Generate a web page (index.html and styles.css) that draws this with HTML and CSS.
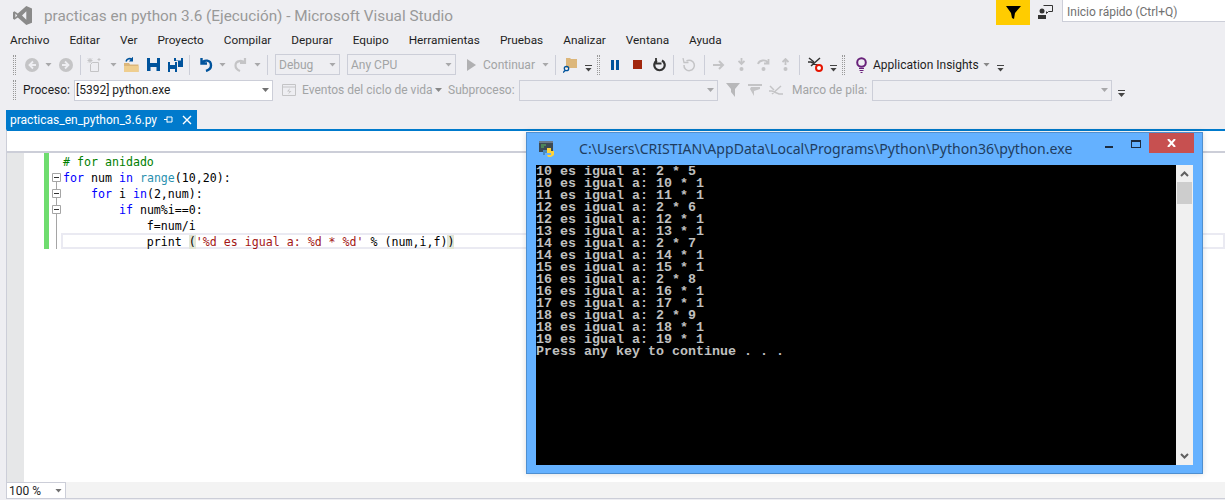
FILE: index.html
```html
<!DOCTYPE html>
<html lang="en">
<head>
    <meta charset="UTF-8">
    <title>practicas en python 3.6 (Ejecución) - Microsoft Visual Studio</title>
    <link rel="stylesheet" href="styles.css">
</head>
<body>
    <div class="titlebar">
        <svg class="vs-logo" viewBox="0 0 20 20"><path d="M14 0l6 2.500v15L14 20l-9-8-3.500 2.500L0 13.500v-7L1.500 5.500 5 8zM14 5.500L9.500 10l4.500 4.500zM2.500 8v4L4.500 10z" fill="#8a8a8a" fill-rule="evenodd"/></svg>
        <span class="app-title">practicas en python 3.6 (Ejecución) - Microsoft Visual Studio</span>
        <div class="notify">
            <svg width="15" height="15" viewBox="0 0 15 15"><path d="M0 1h15L9 8l-1 6-2-1-1-5z" fill="#000"/></svg>
        </div>
        <svg class="ml8 feedback" width="15" height="15" viewBox="0 0 15 15"><circle cx="4" cy="7" r="2.500" fill="#333"/><path d="M0 15v-4h8v4z" fill="#333"/><path d="M5.500 1.500h9v6h-4l-2 2v-2" fill="none" stroke="#333"/></svg>
        <div class="quick">Inicio rápido (Ctrl+Q)</div>
    </div>

    <div class="menubar">
        <span>Archivo</span><span>Editar</span><span>Ver</span><span>Proyecto</span><span>Compilar</span><span>Depurar</span><span>Equipo</span><span>Herramientas</span><span>Pruebas</span><span>Analizar</span><span>Ventana</span><span>Ayuda</span>
    </div>

    <div class="toolbar">
        <i class="grip ml13"></i>
        <svg class="ml9" width="14" height="14" viewBox="0 0 14 14"><circle cx="7" cy="7" r="7" fill="#c4c4c6"/><path d="M8 3.500L4.500 7 8 10.500M5 7h6" stroke="#eeeef2" stroke-width="1.800" fill="none"/></svg>
        <i class="caret ml6"></i>
        <svg class="ml7" width="14" height="14" viewBox="0 0 14 14"><circle cx="7" cy="7" r="7" fill="#c4c4c6"/><path d="M6 3.500L9.500 7 6 10.500M9 7H3" stroke="#eeeef2" stroke-width="1.800" fill="none"/></svg>
        <i class="sep ml7"></i>
        <svg class="ml6" width="16" height="16" viewBox="0 0 16 16"><path d="M5.500 5.500h6v9h-8v-7z" fill="#eeeef2" stroke="#c4c4c6"/><path d="M3 1v5M.5 3.500h5M1 1.500l4 4M5 1.500l-4 4" stroke="#c4c4c6"/><path d="M12 1v3M10.500 2.500h3" stroke="#c4c4c6"/></svg>
        <i class="caret ml7"></i>
        <svg class="ml6" width="16" height="16" viewBox="0 0 16 16"><path d="M1 6h5l1 1.500h8.500V15H1z" fill="#dcb67a"/><path d="M1 9h14.500V15H1z" fill="#efce8f"/><path d="M3 4.500C4 1.500 7 1 9 2.500" stroke="#00539c" stroke-width="1.600" fill="none"/><path d="M9 0v5H5z" fill="#00539c" transform="translate(1 -.5)"/></svg>
        <svg class="ml8" width="13" height="13" viewBox="0 0 13 13"><path d="M0 0h13v13H0z" fill="#00539c"/><path d="M3 0h7v5H3zM3.500 9h6v4h-6z" fill="#eeeef2"/></svg>
        <svg class="ml8" width="15" height="14" viewBox="0 0 15 14"><path d="M0 4h9v10H0z" fill="#00539c"/><path d="M2 4h5v3H2zM2 11h5v3H2z" fill="#eeeef2"/><path d="M6 0h9v9h-5V3H6z" fill="#00539c"/><path d="M8 0h5v2.500H8z" fill="#eeeef2"/></svg>
        <i class="sep ml6"></i>
        <svg class="ml9" width="14" height="15" viewBox="0 0 14 15"><path d="M2.500 1v5.500H8M3 6c2-3.500 9-3.500 9 2.500 0 2.500-2 4.500-5 5.500" stroke="#00539c" stroke-width="2.400" fill="none"/></svg>
        <i class="caret ml6"></i>
        <svg class="ml8" width="13" height="15" viewBox="0 0 13 15"><path d="M11 1v5H6M10.500 6C9 3 1.500 3 1.500 8.500c0 2.500 2 4.500 4.500 5.500" stroke="#c4c4c6" stroke-width="2.200" fill="none"/></svg>
        <i class="caret ml7"></i>
        <i class="sep ml6"></i>
        <div class="combo off ml7 debug">Debug<i class="caret"></i></div>
        <div class="combo off ml7 cpu">Any CPU<i class="caret"></i></div>
        <svg class="ml11" width="9" height="12" viewBox="0 0 9 12"><path d="M0 0l9 6-9 6z" fill="#b0b0b2"/></svg>
        <span class="label off ml7 w53">Continuar</span>
        <i class="caret ml6"></i>
        <i class="sep ml6"></i>
        <svg class="ml7" width="15" height="16" viewBox="0 0 15 16"><path d="M3 1h4l1 1h6v9H3z" fill="#dcb67a"/><circle cx="3.500" cy="11.500" r="2.200" fill="none" stroke="#00539c" stroke-width="1.300"/><path d="M2 13.500L0 15.500" stroke="#00539c" stroke-width="1.500"/></svg>
        <i class="drop ml7"></i>
        <i class="grip ml5"></i>
        <svg class="ml11" width="8" height="10" viewBox="0 0 8 10"><path d="M0 0h3v10H0zM5 0h3v10H5z" fill="#00539c"/></svg>
        <svg class="ml14" width="9" height="9" viewBox="0 0 9 9"><path d="M0 0h9v9H0z" fill="#a1260d"/></svg>
        <svg class="ml11" width="13" height="14" viewBox="0 0 13 14"><path d="M4 2.500a5.200 5.200 0 1 0 5 0" fill="none" stroke="#333" stroke-width="2.200"/><path d="M3 0v5.500h5.500" fill="none" stroke="#333" stroke-width="1.800"/></svg>
        <i class="sep ml7"></i>
        <svg class="ml8" width="14" height="14" viewBox="0 0 14 14"><path d="M4.500 3a5.200 5.200 0 1 1-2.500 4" fill="none" stroke="#c4c4c6" stroke-width="1.500"/><path d="M1 0l1 4.500h4.500" fill="none" stroke="#c4c4c6" stroke-width="1.300"/></svg>
        <i class="sep ml8"></i>
        <svg class="ml8" width="12" height="10" viewBox="0 0 12 10"><path d="M0 5h9M6 1l4 4-4 4" fill="none" stroke="#c4c4c6" stroke-width="2"/></svg>
        <svg class="ml13" width="7" height="13" viewBox="0 0 7 13"><path d="M3.500 0v6M.5 3l3 3 3-3" fill="none" stroke="#c4c4c6" stroke-width="1.800"/><circle cx="3.500" cy="11" r="2" fill="#c4c4c6"/></svg>
        <svg class="ml12" width="13" height="13" viewBox="0 0 13 13"><path d="M1 6c1-4 8-5 10-1M11.500 1v4.500H7" fill="none" stroke="#c4c4c6" stroke-width="1.800"/><circle cx="6.500" cy="11" r="2" fill="#c4c4c6"/></svg>
        <svg class="ml12" width="7" height="13" viewBox="0 0 7 13"><path d="M3.500 7V1M.5 4l3-3 3 3" fill="none" stroke="#c4c4c6" stroke-width="1.800"/><circle cx="3.500" cy="11" r="2" fill="#c4c4c6"/></svg>
        <i class="sep ml10"></i>
        <svg class="ml8" width="15" height="15" viewBox="0 0 15 15"><path d="M1 1l5 4M0 5h3l8 4h3M3 9l9-8" stroke="#333" stroke-width="1.500" fill="none"/><circle cx="11" cy="11" r="3" fill="#fff" stroke="#e51400" stroke-width="2"/></svg>
        <i class="drop ml7"></i>
        <i class="grip ml5"></i>
        <svg class="ml11" width="11" height="16" viewBox="0 0 11 16"><circle cx="5.500" cy="5.500" r="4.300" fill="none" stroke="#68217a" stroke-width="2"/><path d="M3 11.500h5M3.500 13.500h4M4.500 15.500h2" stroke="#68217a"/></svg>
        <span class="label ml6 w105">Application Insights</span>
        <i class="caret dim ml5"></i>
        <i class="drop ml7"></i>
    </div>

    <div class="toolbar second">
        <i class="grip ml13"></i>
        <span class="label ml7 w45">Proceso:</span>
        <div class="combo on ml6 process">[5392] python.exe<i class="caret dark"></i></div>
        <svg class="ml9" width="14" height="12" viewBox="0 0 14 12"><path d="M.5 .5h13v11H.5z" fill="none" stroke="#c4c4c6"/><path d="M.5 3h13" stroke="#c4c4c6"/><path d="M8 4L5 7.500h2.500L6 10.500 9.500 7H7z" fill="#c4c4c6"/></svg>
        <span class="label off ml6 w129">Eventos del ciclo de vida</span>
        <i class="caret dim ml4"></i>
        <span class="label off ml6 w64">Subproceso:</span>
        <div class="combo off ml7 thread"><i class="caret"></i></div>
        <svg class="ml8" width="14" height="14" viewBox="0 0 14 14"><path d="M0 0h14L9 6v8L5 9V6z" fill="#b8b8ba"/></svg>
        <svg class="ml8" width="14" height="12" viewBox="0 0 14 12"><path d="M0 0h14v2H0zM2 5l4 7V7l6-2V3H3z" fill="#c4c4c6"/></svg>
        <svg class="ml7" width="15" height="11" viewBox="0 0 15 11"><path d="M1 1l4 4M0 6h3l7 3h4M3 9l9-8" stroke="#c4c4c6" stroke-width="1.500" fill="none"/></svg>
        <span class="label off ml8 w75">Marco de pila:</span>
        <div class="combo off ml5 frame"><i class="caret"></i></div>
        <i class="drop ml6"></i>
    </div>

    <div class="docwell">
        <div class="tab">
            <span class="tab-name">practicas_en_python_3.6.py</span>
            <svg width="9" height="9" viewBox="0 0 9 9" class="tab-pin"><path d="M0 4.500h3M3 1.500v6M3 2h5v5H3" stroke="#fff" fill="none"/></svg>
            <svg width="10" height="10" viewBox="0 0 10 10" class="tab-close"><path d="M1 1l8 8M9 1l-8 8" stroke="#fff" stroke-width="1.400"/></svg>
        </div>
        <div class="navbar"></div>
        <div class="editor">
            <div class="gutter"></div>
            <div class="margin"></div>
            <div class="changed"></div>
            <svg class="folds" width="14" height="96" viewBox="0 0 14 96">
                <path d="M7.500 29v7M7.500 45v7M7.500 61v35" stroke="#a5a5a5" fill="none"/>
                <path d="M3.500 20.500h8v8h-8zM3.500 36.500h8v8h-8zM3.500 52.500h8v8h-8z" fill="#fff" stroke="#a5a5a5"/>
                <path d="M5 24.500h5M5 40.500h5M5 56.500h5" stroke="#333"/>
            </svg>
            <div class="code">
                <div class="line"><span class="com"># for anidado</span></div>
                <div class="line"><span class="kw">for</span> num <span class="kw">in</span> <span class="fn">range</span>(10,20):</div>
                <div class="line">    <span class="kw">for</span> i <span class="kw">in</span>(2,num):</div>
                <div class="line">        <span class="kw">if</span> num%i==0:</div>
                <div class="line">            f=num/i</div>
                <div class="line current">            print <span class="match">(</span><span class="str">'%d es igual a: %d * %d'</span> % (num,i,f)<span class="match">)</span></div>
            </div>
        </div>
        <div class="statusbar">
            <div class="zoom-box">100 %<i class="caret dark"></i></div>
        </div>
    </div>

    <!-- python console on top of the IDE -->
    <div class="console">
        <div class="console-title">
            <svg class="py-icon" width="16" height="16" viewBox="0 0 16 16"><path d="M0 0h14v11H0z" fill="#3c4a55"/><path d="M0 0h14v2H0z" fill="#6c7a88"/><path d="M2 4h5M2 6h3" stroke="#5fbf5f"/><path d="M8 7h4v3h3v4l-3 2H9l-1-2h4v-2H8z" fill="#ffd43b"/><path d="M4 9h4v3H6v2H4z" fill="#4b8bbe"/></svg>
            <span class="console-path">C:\Users\CRISTIAN\AppData\Local\Programs\Python\Python36\python.exe</span>
            <i class="win-min"></i>
            <i class="win-max"></i>
            <div class="win-close"><svg width="9" height="8" viewBox="0 0 9 8"><path d="M1 0l7 8M8 0L1 8" stroke="#fff" stroke-width="2"/></svg></div>
        </div>
        <div class="console-body">
<pre class="console-text">10 es igual a: 2 * 5
10 es igual a: 10 * 1
11 es igual a: 11 * 1
12 es igual a: 2 * 6
12 es igual a: 12 * 1
13 es igual a: 13 * 1
14 es igual a: 2 * 7
14 es igual a: 14 * 1
15 es igual a: 15 * 1
16 es igual a: 2 * 8
16 es igual a: 16 * 1
17 es igual a: 17 * 1
18 es igual a: 2 * 9
18 es igual a: 18 * 1
19 es igual a: 19 * 1
Press any key to continue . . .</pre>
            <div class="scroll">
                <svg width="9" height="6" viewBox="0 0 9 6"><path d="M1 5l3.500-3.500L8 5" stroke="#606060" stroke-width="2" fill="none"/></svg>
                <div class="thumb"></div>
                <svg class="scroll-down" width="9" height="6" viewBox="0 0 9 6"><path d="M1 1l3.500 3.500L8 1" stroke="#606060" stroke-width="2" fill="none"/></svg>
            </div>
        </div>
    </div>
</body>
</html>
```

FILE: styles.css
```css
html, body {
    margin: 0;
    height: 100%;
}
body {
    width: 1225px;
    height: 500px;
    overflow: hidden;
    position: relative;
    background-color: #eeeef2;
    font-family: Roboto, sans-serif;
    font-size: 12px;
    color: #1e1e1e;
}
i {
    display: block;
    flex: none;
}
svg {
    display: block;
    flex: none;
}

/* title + menu */
.titlebar {
    display: flex;
    align-items: flex-start;
    height: 28px;
}
.vs-logo {
    width: 19px;
    height: 19px;
    margin: 6px 0 0 13px;
}
.app-title {
    margin: 6px 0 0 12px;
    width: 396px;
    font-size: 15.3px;
    line-height: 20px;
    color: #999;
    white-space: nowrap;
}
.notify {
    display: flex;
    justify-content: center;
    align-items: center;
    width: 34px;
    height: 25px;
    margin-left: 556px;
    background-color: #ffcc00;
}
.feedback {
    margin-top: 4px;
}
.quick {
    flex: 1;
    height: 22px;
    margin-left: 9px;
    padding-left: 4px;
    box-sizing: border-box;
    background-color: #fff;
    border: 1px solid #ccced8;
    border-top: none;
    border-right: none;
    line-height: 25px;
    color: #717171;
}
.menubar {
    display: flex;
    align-items: center;
    gap: 20px;
    height: 24px;
    box-sizing: border-box;
    padding-left: 10px;
    font-size: 11.8px;
    white-space: nowrap;
}

/* toolbars */
.toolbar {
    display: flex;
    align-items: center;
    height: 25px;
    white-space: nowrap;
}
.toolbar.second {
    height: 26px;
}
.grip {
    width: 3px;
    height: 20px;
    box-sizing: border-box;
    border-left: 1px dotted #999;
    border-right: 1px dotted #999;
}
.sep {
    width: 1px;
    height: 20px;
    background-color: #ccced8;
}
.caret {
    width: 7px;
    height: 4px;
    background-color: #a8a8aa;
    clip-path: polygon(0 0, 100% 0, 50% 100%);
}
.caret.dark {
    background-color: #717171;
}
.caret.dim {
    background-color: #888;
}
.drop {
    width: 7px;
    height: 8px;
    margin-top: 8px;
    border-top: 1px solid #444;
    box-sizing: border-box;
    position: relative;
}
.drop::after {
    content: "";
    position: absolute;
    left: 0;
    top: 2px;
    width: 7px;
    height: 4px;
    background-color: #444;
    clip-path: polygon(0 0, 100% 0, 50% 100%);
}
.label {
    flex: none;
    line-height: 16px;
}
.off {
    color: #a2a4a5;
}
.combo {
    display: flex;
    align-items: center;
    flex: none;
    height: 21px;
    padding-left: 3px;
    box-sizing: border-box;
    border: 1px solid #ccced8;
}
.combo.on {
    background-color: #fff;
    padding-left: 1px;
}
.debug {
    width: 65px;
}
.cpu {
    width: 109px;
}
.process,
.thread {
    width: 199px;
}
.frame {
    width: 240px;
}
.combo .caret {
    margin-left: auto;
    margin-right: 3px;
}
.w45 { width: 45px; }
.w53 { width: 53px; }
.w64 { width: 64px; }
.w75 { width: 75px; }
.w105 { width: 105px; }
.w129 { width: 129px; }
.ml4 { margin-left: 4px; }
.ml5 { margin-left: 5px; }
.ml6 { margin-left: 6px; }
.ml7 { margin-left: 7px; }
.ml8 { margin-left: 8px; }
.ml9 { margin-left: 9px; }
.ml10 { margin-left: 10px; }
.ml11 { margin-left: 11px; }
.ml12 { margin-left: 12px; }
.ml13 { margin-left: 13px; }
.ml14 { margin-left: 14px; }

/* document well */
.docwell {
    margin: 7px 0 0 6px;
}
.tab {
    display: flex;
    align-items: center;
    width: 191px;
    height: 19px;
    box-sizing: border-box;
    padding-left: 4px;
    background-color: #007acc;
    color: #fff;
}
.tab-name {
    width: 154px;
    white-space: nowrap;
}
.tab-close {
    margin-left: 9px;
}
.navbar {
    height: 20px;
    border-top: 2px solid #007acc;
    border-left: 1px solid #ccced8;
    border-bottom: 2px solid #ccced8;
    background-color: #fff;
}
.editor {
    display: flex;
    height: 329px;
    border-left: 1px solid #ccced8;
    background-color: #fff;
}
.gutter {
    width: 17px;
    background-color: #e6e7e8;
}
.margin {
    width: 20px;
}
.changed {
    width: 5px;
    height: 96px;
    background-color: #6fdc6f;
}
.code {
    flex: 1;
    font-family: "DejaVu Sans Mono", monospace;
    font-size: 11.62px;
    color: #000;
}
.line {
    height: 16px;
    box-sizing: border-box;
    padding-top: 1px;
    line-height: 16px;
    white-space: pre;
}
.line.current {
    margin-left: -2px;
    padding-left: 2px;
    box-shadow: inset 0 0 0 2px #eaeaf2;
}
.kw { color: #0000ff; }
.fn { color: #2b91af; }
.com { color: #008000; }
.str { color: #a31515; }
.match { background-color: #e2e6d6; }
.statusbar {
    height: 16px;
    border-left: 1px solid #ccced8;
    border-bottom: 1px solid #ccced8;
    background-color: #f3f3f3;
}
.zoom-box {
    display: flex;
    align-items: center;
    justify-content: space-between;
    width: 59px;
    height: 16px;
    box-sizing: border-box;
    padding: 0 3px 0 2px;
    background-color: #fff;
    border-right: 1px solid #ccced8;
    border-top: 1px solid #ccced8;
}

/* console window */
.console {
    position: absolute;
    left: 526px;
    top: 132px;
    width: 677px;
    height: 342px;
    box-sizing: border-box;
    border: 1px solid #4e8fd0;
    background-color: #64b1ff;
    box-shadow: 0 0 6px rgba(0, 0, 0, 0.15);
}
.console-title {
    display: flex;
    align-items: flex-start;
    height: 32px;
}
.py-icon {
    margin: 8px 0 0 12px;
}
.console-path {
    width: 526px;
    margin: 6px 0 0 24px;
    font-family: "Noto Sans", sans-serif;
    font-size: 14.08px;
    line-height: 20px;
    color: #1f3d5f;
    white-space: nowrap;
}
.win-min {
    width: 8px;
    height: 2px;
    margin: 13px 0 0 0;
    background-color: #1c2c40;
}
.win-max {
    width: 10px;
    height: 8px;
    margin: 7px 0 0 18px;
    box-sizing: border-box;
    border: 1px solid #1c2c40;
    border-top-width: 2px;
}
.win-close {
    display: flex;
    justify-content: center;
    align-items: center;
    width: 45px;
    height: 20px;
    margin-left: 8px;
    background-color: #c75050;
}
.console-body {
    display: flex;
    height: 300px;
    margin: 0 9px 0 9px;
    background-color: #000;
}
.console-text {
    flex: 1;
    margin: 0;
    padding-top: 1px;
    font-family: "Liberation Mono", monospace;
    font-size: 13.33px;
    font-weight: bold;
    line-height: 12px;
    color: #c0c0c0;
}
.scroll {
    display: flex;
    flex-direction: column;
    align-items: center;
    width: 17px;
    padding: 6px 0;
    box-sizing: border-box;
    background-color: #f0f0f0;
}
.thumb {
    width: 15px;
    height: 22px;
    margin-top: 5px;
    background-color: #cdcdcd;
}
.scroll-down {
    margin-top: auto;
}
```
